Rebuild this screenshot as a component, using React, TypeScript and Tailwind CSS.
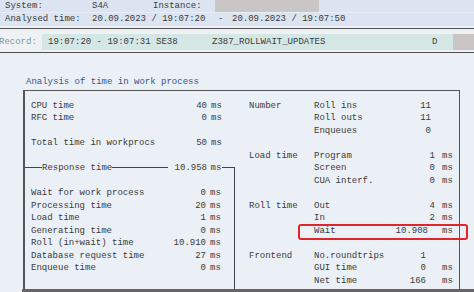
import React from 'react'

const leftTop = [
  { label: 'CPU time', value: '40' },
  { label: 'RFC time', value: '0' },
  null,
  { label: 'Total time in workprocs', value: '50' },
  null,
]

const leftGroup = [
  null,
  { label: 'Wait for work process', value: '0' },
  { label: 'Processing time', value: '20' },
  { label: 'Load time', value: '1' },
  { label: 'Generating time', value: '0' },
  { label: 'Roll (in+wait) time', value: '10.910' },
  { label: 'Database request time', value: '27' },
  { label: 'Enqueue time', value: '0' },
  null,
]

// unit column classes per section, so the values line up as in the SAP screen
const right = [
  { cat: 'Number', sub: 'Roll ins', value: '11', unit: '', unitCls: 'w-[27px] pl-[11px]' },
  { cat: '', sub: 'Roll outs', value: '11', unit: '', unitCls: 'w-[27px] pl-[11px]' },
  { cat: '', sub: 'Enqueues', value: '0', unit: '', unitCls: 'w-[27px] pl-[11px]' },
  null,
  { cat: 'Load time', sub: 'Program', value: '1', unit: 'ms', unitCls: 'w-[23px] pl-[7px]' },
  { cat: '', sub: 'Screen', value: '0', unit: 'ms', unitCls: 'w-[23px] pl-[7px]' },
  { cat: '', sub: 'CUA interf.', value: '0', unit: 'ms', unitCls: 'w-[23px] pl-[7px]' },
  null,
  { cat: 'Roll time', sub: 'Out', value: '4', unit: 'ms', unitCls: 'w-[23px] pl-[7px]' },
  { cat: '', sub: 'In', value: '2', unit: 'ms', unitCls: 'w-[23px] pl-[7px]' },
  { cat: '', sub: 'Wait', value: '10.908', unit: 'ms', unitCls: 'w-[30px] pl-[14px]', mark: true },
  null,
  { cat: 'Frontend', sub: 'No.roundtrips', value: '1', unit: '', unitCls: 'w-[32px] pl-[16px]' },
  { cat: '', sub: 'GUI time', value: '0', unit: 'ms', unitCls: 'w-[32px] pl-[16px]' },
  { cat: '', sub: 'Net time', value: '166', unit: 'ms', unitCls: 'w-[32px] pl-[16px]' },
]

function LeftRow({ row }: { row: { label: string; value: string } | null }) {
  if (!row) return <div className="h-[12.5px]" />
  return (
    <div className="flex h-[12.5px] items-center whitespace-pre pl-[6px]">
      <span className="flex-1">{row.label}</span>
      <span className="text-right">{row.value}</span>
      <span className="w-[28px] pl-[4px]">ms</span>
    </div>
  )
}

export default function App() {
  return (
    <div className="h-[292px] w-[474px] overflow-hidden bg-[#ebf0f6] font-['Liberation_Mono',monospace] text-[9px] leading-none text-[#3a3a3a]">
      {/* Header */}
      <div className="bg-[#dbe4f0]">
        <div className="flex h-[13px] items-center border-b border-[#e8eef6] whitespace-pre">
          <span className="w-[92px] pl-[5px]">System:</span>
          <span className="w-[61px]">S4A</span>
          <span className="w-[62px]">Instance:</span>
          <div className="h-full w-[104px] bg-[#c9c6c6]" />
        </div>
        <div className="flex h-[13px] items-center whitespace-pre">
          <span className="w-[92px] pl-[5px]">Analysed time:</span>
          <span className="w-[126px]">20.09.2023 / 19:07:20</span>
          <span className="w-[14px]">-</span>
          <span>20.09.2023 / 19:07:50</span>
        </div>
      </div>
      <div className="h-[2px] bg-[#eef2f7]" />
      <div className="h-[1px] bg-[#505050]" />

      {/* Record */}
      <div className="flex bg-[#eef2f5] pt-[5px] pb-[2px]">
        <span className="ml-[-1px] flex h-[16px] w-[43px] items-center text-[#7a9898]">Record:</span>
        <div className="flex h-[16px] flex-1 items-center whitespace-pre bg-[#d4e7e5] pl-[6px]">
          <span className="w-[164px]">19:07:20 - 19:07:31 SE38</span>
          <span className="w-[220px]">Z387_ROLLWAIT_UPDATES</span>
          <span>D</span>
        </div>
        <div className="h-[16px] w-[21px] bg-[#c9c5c5]" />
      </div>
      <div className="h-[1px] bg-[#505050]" />

      {/* Title */}
      <div className="mt-[23px] mb-[2px] flex h-[12px] items-center pl-[26px] text-[#34558a]">
        Analysis of time in work process
      </div>

      {/* Main box */}
      <div className="ml-[23px] flex h-[199px] w-[437px] border-t border-r border-l-2 border-[#555] pt-[9px]">
        <div className="flex w-[210px] flex-col">
          {leftTop.map((row, i) => (
            <LeftRow key={i} row={row} />
          ))}
          {/* Response time group */}
          <div className="flex h-[12.5px] items-center whitespace-pre">
            <div className="mt-[4px] h-[8.5px] w-[17px] self-start border-t border-[#444]" />
            <span>Response time</span>
            <div className="mt-[4px] h-[8.5px] flex-1 self-start border-t border-[#444]" />
            <span className="pl-[7px]">10.958</span>
            <span className="w-[15px] pl-[3.5px]">ms</span>
            <div className="mt-[4px] h-[8.5px] w-[13px] self-start border-t border-r border-[#444]" />
          </div>
          <div className="flex-1 border-r border-[#444]">
            {leftGroup.map((row, i) => (
              <LeftRow key={i} row={row} />
            ))}
          </div>
        </div>

        <div className="flex flex-1 flex-col pl-[14px] pr-[1px]">
          {right.map((row, i) =>
            row ? (
              <div key={i} className="relative flex h-[12.5px] items-center whitespace-pre">
                <span className="w-[65px]">{row.cat}</span>
                <span className="flex-1">{row.sub}</span>
                <span className="text-right">{row.value}</span>
                <span className={row.unitCls}>{row.unit}</span>
                {row.mark && (
                  <div className="absolute top-[-1px] bottom-[-2px] left-[49px] right-[-10px] rounded-[3px] border-2 border-[#e0262b]" />
                )}
              </div>
            ) : (
              <div key={i} className="h-[12.5px]" />
            )
          )}
        </div>
      </div>
      <div className="ml-[22px] h-[3px] bg-[#666]" />
    </div>
  )
}
